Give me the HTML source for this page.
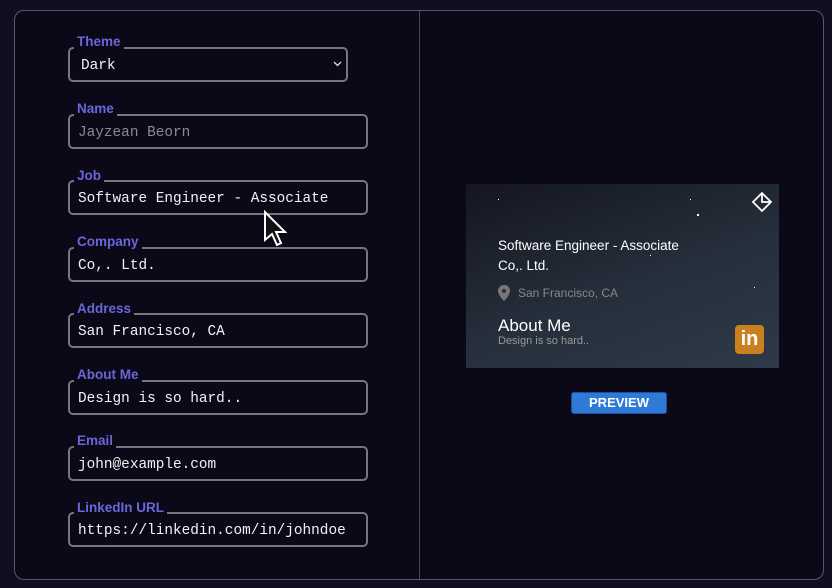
<!DOCTYPE html>
<html><head><style>
*{box-sizing:border-box;margin:0;padding:0}
body{width:832px;height:588px;background:#120d20;position:relative;overflow:hidden;font-family:"Liberation Sans",sans-serif}
.frame{position:absolute;left:14px;top:10px;width:810px;height:570px;border:1px solid #5a5868;border-radius:10px;background:#0b0818}
.div{position:absolute;left:419px;top:11px;width:1px;height:568px;background:#4a4858}
.f{position:absolute;left:68px;width:300px;height:35px;border:2px solid #77767f;border-radius:5px;font-family:"Liberation Mono",monospace;font-size:14.4px;color:#f2f2f2;padding:9px 0 0 8px}
.lab{position:absolute;left:74px;font-size:13.5px;font-weight:bold;color:#6b66d9;background:#0b0818;padding:0 3px;line-height:14px}
.card{position:absolute;left:466px;top:184px;width:313px;height:184px;background:linear-gradient(160deg,#14161f 0%,#262f3c 55%,#2e3a48 100%)}
.star{position:absolute;width:2px;height:2px;background:#fff}
.btn{position:absolute;left:571px;top:392px;width:96px;height:22px;background:#2e7ad6;border-radius:3px;border:1px solid #1a4fa0;color:#fff;font-weight:bold;font-size:13px;text-align:center;line-height:20px}
</style></head><body>
<div class="frame"></div><div class="div"></div>

<div class="f" style="top:47px;width:280px;padding-left:11px">Dark<svg style="position:absolute;right:4px;top:12px" width="9" height="6" viewBox="0 0 9 6"><path d="M1 1 L4.5 4.5 L8 1" fill="none" stroke="#ddd" stroke-width="1.3"/></svg></div>
<div class="lab" style="top:35px">Theme</div>
<div class="f" style="top:114px;color:#8a8a8f">Jayzean Beorn</div>
<div class="lab" style="top:102px">Name</div>
<div class="f" style="top:180px">Software Engineer - Associate</div>
<div class="lab" style="top:169px">Job</div>
<div class="f" style="top:247px">Co,. Ltd.</div>
<div class="lab" style="top:235px">Company</div>
<div class="f" style="top:313px">San Francisco, CA</div>
<div class="lab" style="top:302px">Address</div>
<div class="f" style="top:380px">Design is so hard..</div>
<div class="lab" style="top:368px">About Me</div>
<div class="f" style="top:446px">john@example.com</div>
<div class="lab" style="top:434px">Email</div>
<div class="f" style="top:512px">https://linkedin.com/in/johndoe</div>
<div class="lab" style="top:501px">LinkedIn URL</div>

<svg style="position:absolute;left:263px;top:210px" width="26" height="38" viewBox="0 0 26 38"><path d="M2 2 L2 30 L9 24 L14 35 L18 33 L13 22 L22 22 Z" fill="#111" stroke="#fff" stroke-width="2"/></svg>

<div class="card">
<div class="star" style="left:32px;top:15px;width:1px;height:1px"></div>
<div class="star" style="left:224px;top:15px;width:1px;height:1px"></div>
<div class="star" style="left:231px;top:30px"></div>
<div class="star" style="left:184px;top:71px;width:1px;height:1px"></div>
<div class="star" style="left:288px;top:103px;width:1px;height:1px"></div>
<svg style="position:absolute;left:285px;top:7px" width="22" height="22" viewBox="0 0 22 22"><path d="M11 2 L20 11 L11 20 L2 11 Z M11 2 L11 11 L20 11" fill="none" stroke="#fff" stroke-width="1.8"/></svg>
<div style="position:absolute;left:32px;top:52px;color:#fff;font-size:13.5px;line-height:20px">Software Engineer - Associate<br>Co,. Ltd.</div>
<svg style="position:absolute;left:32px;top:101px" width="12" height="16" viewBox="0 0 12 16"><path d="M6 0 C2.5 0 0 2.5 0 6 C0 10 6 16 6 16 C6 16 12 10 12 6 C12 2.5 9.5 0 6 0 Z" fill="#777"/><circle cx="6" cy="6" r="2" fill="#2a303c"/></svg>
<div style="position:absolute;left:52px;top:102px;color:#888;font-size:12px">San Francisco, CA</div>
<div style="position:absolute;left:32px;top:132px;color:#fff;font-size:17px">About Me</div>
<div style="position:absolute;left:32px;top:151px;color:#999;font-size:11px">Design is so hard..</div>
<div style="position:absolute;left:269px;top:141px;width:29px;height:29px;background:#c9801f;border-radius:4px;color:#fff;font-weight:bold;font-size:20px;text-align:center;line-height:29px">in</div>
</div>
<div class="btn">PREVIEW</div>
</body></html>
